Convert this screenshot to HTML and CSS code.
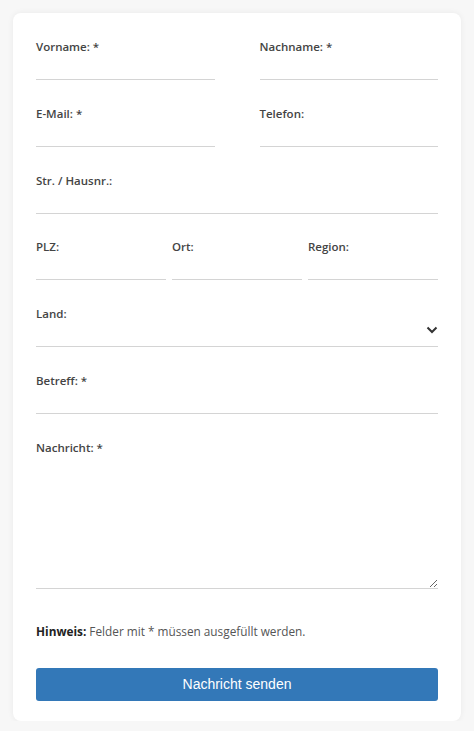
FILE: index.html
```html
<!DOCTYPE html>
<html lang="de">
<head>
<meta charset="utf-8">
<link rel="stylesheet" href="styles.css">
</head>
<body>
<form class="card">
  <div class="row two">
    <div class="field"><label>Vorname: *</label><input type="text"></div>
    <div class="field"><label>Nachname: *</label><input type="text"></div>
  </div>
  <div class="row two">
    <div class="field"><label>E-Mail: *</label><input type="text"></div>
    <div class="field"><label>Telefon:</label><input type="text"></div>
  </div>
  <div class="row">
    <div class="field"><label>Str. / Hausnr.:</label><input type="text"></div>
  </div>
  <div class="row three">
    <div class="field"><label>PLZ:</label><input type="text"></div>
    <div class="field"><label>Ort:</label><input type="text"></div>
    <div class="field"><label>Region:</label><input type="text"></div>
  </div>
  <div class="row">
    <div class="field"><label>Land:</label>
      <div class="select">
        <svg class="chev" width="12" height="8" viewBox="0 0 12 8"><path d="M1.5 1.5 L6 6 L10.5 1.5" fill="none" stroke="#333" stroke-width="2"/></svg>
      </div>
    </div>
  </div>
  <div class="row">
    <div class="field"><label>Betreff: *</label><input type="text"></div>
  </div>
  <div class="row">
    <div class="field"><label>Nachricht: *</label><textarea></textarea></div>
  </div>
  <p class="hint"><b>Hinweis:</b> Felder mit * müssen ausgefüllt werden.</p>
  <button type="button" class="send">Nachricht senden</button>
</form>
</body>
</html>
```
FILE: styles.css
```css
html, body { margin: 0; padding: 0; }
body {
  background: #f7f7f7;
  font-family: "Open Sans", "DejaVu Sans", sans-serif;
  padding: 13px 13px 0 13px;
}
.card {
  background: #fff;
  border-radius: 8px;
  box-shadow: 0 0 6px rgba(0,0,0,0.06);
  width: 448px;
  box-sizing: border-box;
  padding: 25px 23px 20px 23px;
}
.row { display: flex; gap: 45px; margin-bottom: 24.8px; }
.row.three { gap: 6px; }
.field { flex: 1; display: flex; flex-direction: column; min-width: 0; }
label {
  font-size: 11.5px;
  font-weight: 600;
  color: #444;
  line-height: 17px;
  height: 17px;
}
input, .select, textarea {
  border: none;
  border-bottom: 1px solid #d4d4d4;
  height: 25px;
  box-sizing: border-box;
  padding: 0;
  margin: 0;
  width: 100%;
  outline: none;
  background: transparent;
  font: inherit;
}
.select { position: relative; }
.chev { position: absolute; right: 0; top: 4px; }
textarea { height: 133px; display: block; resize: vertical; }
.hint {
  margin: 34px 0 0 0;
  font-size: 11.8px;
  line-height: 17px;
  color: #555;
}
.hint b { color: #222; font-weight: 700; }
.send {
  display: block;
  width: 100%;
  margin-top: 28px;
  height: 33px;
  border: none;
  border-radius: 3px;
  background: #3378b8;
  color: #fff;
  font-family: "Liberation Sans", Arial, sans-serif;
  font-size: 14px;
}
```
